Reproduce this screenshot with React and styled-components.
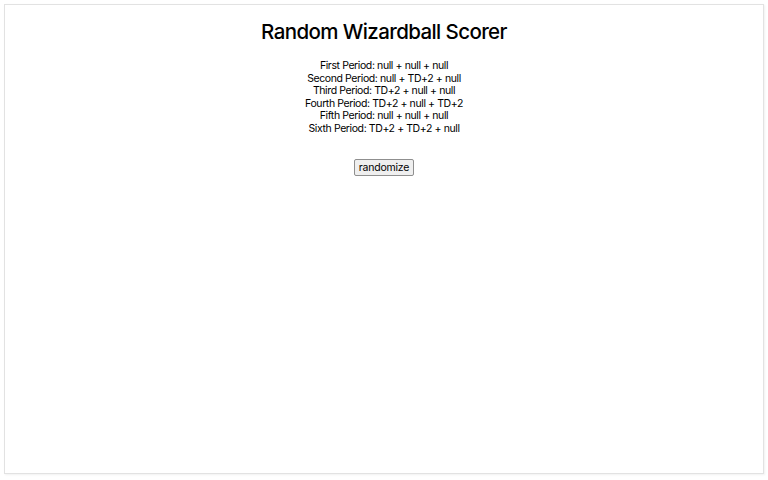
import React, { useState } from "react";
import styled, { createGlobalStyle } from "styled-components";

const GlobalStyle = createGlobalStyle`
  html, body {
    margin: 0;
    padding: 0;
    background: #ffffff;
  }
`;

const Frame = styled.div`
  margin: 4px;
  height: 470px;
  box-sizing: border-box;
  border: 1px solid #e2e2e2;
  box-shadow: 1px 1px 2px rgba(0, 0, 0, 0.06);
  font-family: Inter, "Liberation Sans", sans-serif;
  color: #000;
  text-align: center;
`;

const Title = styled.h1`
  margin: 13px 0 14px;
  font-size: 20.5px;
  font-weight: 500;
  letter-spacing: -0.6px;
  line-height: 28px;
`;

const Periods = styled.div`
  font-size: 10.5px;
  letter-spacing: -0.4px;
  line-height: 12.6px;
`;

const Button = styled.button`
  margin-top: 23px;
  font-family: Inter, "Liberation Sans", sans-serif;
  font-size: 10.5px;
  letter-spacing: -0.2px;
  padding: 1px 4px;
  background: #efefef;
  border: 1px solid #8f8f8f;
  border-radius: 2px;
  color: #000;
`;

const names = ["First", "Second", "Third", "Fourth", "Fifth", "Sixth"];

const start = [
  ["null", "null", "null"],
  ["null", "TD+2", "null"],
  ["TD+2", "null", "null"],
  ["TD+2", "null", "TD+2"],
  ["null", "null", "null"],
  ["TD+2", "TD+2", "null"],
];

function App() {
  const [scores, setScores] = useState(start);

  const randomize = () =>
    setScores(names.map(() => [0, 1, 2].map(() => (Math.random() < 0.5 ? "null" : "TD+2"))));

  return (
    <>
      <GlobalStyle />
      <Frame>
        <Title>Random Wizardball Scorer</Title>
        <Periods>
          {names.map((n, i) => (
            <div key={n}>
              {n} Period: {scores[i].join(" + ")}
            </div>
          ))}
        </Periods>
        <Button onClick={randomize}>randomize</Button>
      </Frame>
    </>
  );
}

export default App;
